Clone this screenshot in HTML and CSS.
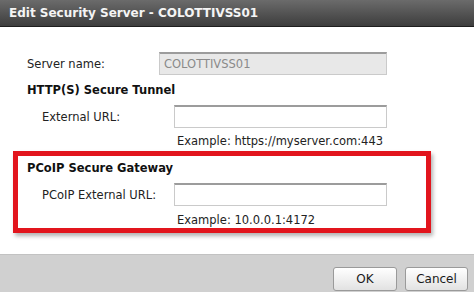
FILE: index.html
```html
<!DOCTYPE html>
<html lang="en">
<head>
    <meta charset="UTF-8">
    <meta name="viewport" content="width=device-width, initial-scale=1.0">
    <title>Edit Security Server</title>
    <link rel="stylesheet" href="styles.css">
</head>
<body>
    <div class="dialog">
        <div class="naslov">Edit Security Server - COLOTTIVSS01</div>

        <div class="vsebina">
            <div class="vrstica">
                <label>Server name:</label>
                <input type="text" class="polje onemogoceno" value="COLOTTIVSS01" disabled>
            </div>

            <div class="odsek">HTTP(S) Secure Tunnel</div>
            <div class="vrstica zamik">
                <label>External URL:</label>
                <input type="text" class="polje">
            </div>
            <div class="primer">Example: https://myserver.com:443</div>

            <div class="oznaceno">
                <div class="odsek prvi">PCoIP Secure Gateway</div>
                <div class="vrstica zamik">
                    <label>PCoIP External URL:</label>
                    <input type="text" class="polje">
                </div>
                <div class="primer">Example: 10.0.0.1:4172</div>
            </div>
        </div>

        <div class="noga">
            <button class="gumb ok">OK</button>
            <button class="gumb preklici">Cancel</button>
        </div>
    </div>
</body>
</html>
```

FILE: styles.css
```css
* {
    box-sizing: border-box;
}

body {
    margin: 0;
    background-color: #fff;
    font-family: "DejaVu Sans", Verdana, sans-serif;
    font-size: 11.5px;
    color: #222;
}

.dialog {
    display: flex;
    flex-direction: column;
    width: 474px;
    height: 292px;
}

.naslov {
    height: 27px;
    line-height: 26px;
    padding-left: 9px;
    font-size: 12px;
    font-weight: bold;
    color: #f4f4f4;
    background: linear-gradient(#6b6b6b, #3d3d3d);
    border-bottom: 1px solid #1e1e1e;
}

.vsebina {
    flex: 1;
    padding: 25px 0 0 27px;
}

.vrstica {
    display: flex;
    align-items: center;
    width: 360px;
    height: 23px;
}

.vrstica label {
    width: 132px;
    flex-shrink: 0;
}

.zamik {
    width: 345px;
    margin-left: 15px;
}

.polje {
    flex: 1;
    height: 23px;
    padding: 0 4px;
    font-family: inherit;
    font-size: 11.5px;
    background-color: #fff;
    border: 1px solid #cacaca;
    border-top: 2px solid #9c9c9c;
}

.onemogoceno {
    background-color: #e8e8e8;
    color: #8a8a8a;
}

.odsek {
    margin-top: 7px;
    line-height: 16px;
    font-weight: bold;
    color: #111;
}

.odsek + .vrstica {
    margin-top: 7px;
}

.odsek.prvi {
    margin-top: 4px;
}

.primer {
    margin-top: 5px;
    padding-left: 150px;
    line-height: 16px;
}

.oznaceno {
    width: 418px;
    margin: 2px 0 0 -14px;
    padding-left: 9px;
    border: 5px solid #e2151d;
    box-shadow: 2px 3px 4px rgba(0, 0, 0, 0.3);
}

.oznaceno .primer {
    margin-top: 6px;
}

.noga {
    display: flex;
    justify-content: flex-end;
    gap: 8px;
    height: 38px;
    padding: 12px 6px 0 0;
    background-color: #d0d0d0;
    border-top: 1px solid #c2c2c2;
}

.gumb {
    height: 24px;
    font-family: inherit;
    font-size: 12px;
    color: #1a1a1a;
    background: linear-gradient(#ffffff, #e2e2e2);
    border: 1px solid #9a9a9a;
    border-radius: 3px;
}

.ok {
    width: 64px;
}

.preklici {
    width: 63px;
}
```
